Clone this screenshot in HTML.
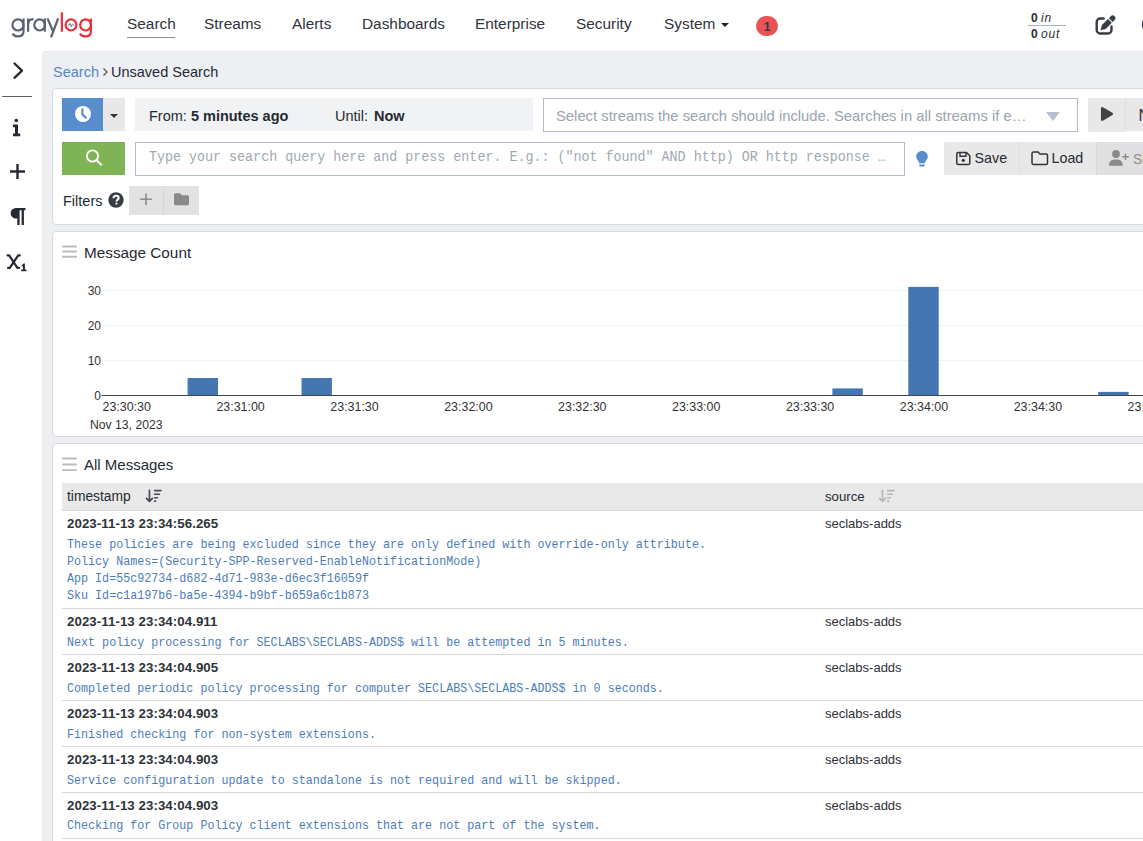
<!DOCTYPE html>
<html><head><meta charset="utf-8">
<style>
*{box-sizing:border-box;margin:0;padding:0}
html,body{width:1143px;height:841px;overflow:hidden;background:#fff;font-family:"Liberation Sans",sans-serif;color:#1f1f1f}
.a{position:absolute;white-space:pre}
#nav{position:absolute;left:0;top:0;width:1143px;height:51px;background:#fff}
.nl{position:absolute;top:15px;font-size:15.4px;color:#30343b;line-height:18px}
#side{position:absolute;left:0;top:51px;width:42px;height:790px;background:#fff}
#main{position:absolute;left:42px;top:51px;width:1101px;height:790px;background:#eeeff2;border-top-left-radius:4px;border-top:1px solid #e6e7eb;border-left:1px solid #e9eaee}
.panel{position:absolute;left:52px;width:1100px;background:#fff;border:1px solid #d6dae2;border-radius:4px}
.mono{font-family:"Liberation Mono",monospace}
</style></head><body>
<div id="nav">
  <!-- logo -->
  <svg style="position:absolute;left:0;top:0" width="100" height="45">
   <g fill="none" stroke-width="2.2">
    <g stroke="#5a6371">
     <ellipse cx="18" cy="24.9" rx="5.5" ry="5.6"/>
     <path d="M23.5,18.4 V31.5 C23.5,35 21.2,36.4 18,36.4 C15.2,36.4 13.6,35.3 12.6,33.6"/>
     <path d="M28.1,18.4 V31.7 M28.1,24.2 C28.1,20.6 30.2,19.2 33.6,19.2"/>
     <ellipse cx="39.6" cy="24.9" rx="5.3" ry="5.6"/>
     <path d="M44.8,18.4 V31.7"/>
     <path d="M47.5,18.4 L53,31.3 M58.2,18.4 L51,37.4"/>
    </g>
    <g stroke="#ea2e3a">
     <path d="M61.85,12.3 V31.7"/>
     <ellipse cx="71" cy="24.9" rx="5.4" ry="5.6"/>
     <ellipse cx="85.6" cy="24.9" rx="5.4" ry="5.6"/>
     <path d="M90.9,18.4 V31.5 C90.9,35 88.6,36.4 85.4,36.4 C82.6,36.4 81,35.3 80,33.6"/>
    </g>
    <polyline points="68,25.2 69.3,25.2 70.1,23.4 71.3,26.8 72.2,24.2 73,25.2 74,25.2" stroke="#5a6371" stroke-width="0.8"/>
   </g>
  </svg>
  <div class="nl" style="left:127px">Search</div>
  <div style="position:absolute;left:127px;top:37px;width:48px;height:1px;background:#8a8e96"></div>
  <div class="nl" style="left:204px">Streams</div>
  <div class="nl" style="left:292px">Alerts</div>
  <div class="nl" style="left:362px">Dashboards</div>
  <div class="nl" style="left:475px">Enterprise</div>
  <div class="nl" style="left:576px">Security</div>
  <div class="nl" style="left:664px">System</div>
  <div style="position:absolute;left:721px;top:23px;width:0;height:0;border-left:4px solid transparent;border-right:4px solid transparent;border-top:4px solid #1f2328"></div>
  <div style="position:absolute;left:756px;top:16px;width:22px;height:20px;border-radius:10px;background:#e95257;color:#323943;font-size:12px;font-weight:bold;text-align:center;line-height:22px">1</div>
  <div class="a" style="left:1031px;top:11px;font-size:12px;line-height:14px;color:#2a2e35"><b>0</b> <i style="letter-spacing:0.8px">in</i></div>
  <div style="position:absolute;left:1028px;top:25px;width:38px;height:1px;background:#a4b1c2"></div>
  <div class="a" style="left:1031px;top:27px;font-size:12px;line-height:14px;color:#2a2e35"><b>0</b> <i style="letter-spacing:0.8px">out</i></div>
  <svg style="position:absolute;left:1080px;top:0" width="63" height="50">
   <path d="M23.7,18.5 H20.2 A3.5,3.5 0 0 0 16.7,22 V30 A3.5,3.5 0 0 0 20.2,33.5 H28 A3.5,3.5 0 0 0 31.5,30 V26.5" fill="none" stroke="#373c45" stroke-width="2.4" stroke-linecap="round"/>
   <g transform="translate(21,29.8) rotate(45)">
    <path d="M0,0.8 L-2.7,-4 V-12.6 H2.7 V-4 Z" fill="#373c45"/>
    <path d="M-2.7,-13.8 H2.7 V-16.5 A2.7,2.7 0 0 0 -2.7,-16.5 Z" fill="#373c45"/>
   </g>
   <circle cx="71.5" cy="24.5" r="8.5" fill="none" stroke="#373c45" stroke-width="2.5"/>
  </svg>
</div>
<div id="side">
  <svg style="position:absolute;left:0;top:0" width="42" height="240" viewBox="0 51 42 240">
    <polyline points="14.5,63.5 22,70.7 14.5,77.8" fill="none" stroke="#252a33" stroke-width="2.3" stroke-linecap="round" stroke-linejoin="round"/>
    <rect x="2" y="96" width="30" height="1" fill="#5a5e66"/>
    <circle cx="16.3" cy="120.5" r="1.8" fill="#252a33"/>
    <path d="M13,124.5 H18 V133.5 H20.2 V136.2 H13 V133.5 H15 V127.2 H13 Z" fill="#252a33"/>
    <path d="M17.5,164 V179 M10,171.5 H25" stroke="#252a33" stroke-width="2.4" fill="none"/>
    <path d="M15.9,208 H25.5 V210.3 H23.9 V225 H21.6 V210.3 H19.6 V225 H17.3 V218.6 H15.9 A5.3,5.3 0 0 1 15.9,208 Z" fill="#252a33"/>
    <path d="M7.6,255.4 H9.2 L17.4,267.8 H19" stroke="#252a33" stroke-width="2.2" fill="none" stroke-linecap="round" stroke-linejoin="round"/><path d="M19.8,255.4 H18.2 L9.8,267.8 H8" stroke="#252a33" stroke-width="2.2" fill="none" stroke-linecap="round" stroke-linejoin="round"/>
    <path d="M21.5,265.6 L23.6,263.6 H24.9 V269.6 H26.4 V271.3 H21.3 V269.6 H23 V266 L22,266.8 Z" fill="#252a33"/>
  </svg>
</div>
<div id="main"></div>
<!-- breadcrumb -->
<div class="a" style="left:53px;top:63px;font-size:14.5px;line-height:18px;color:#5587c8">Search</div>
<svg style="position:absolute;left:101px;top:67px" width="8" height="10"><polyline points="2.5,1.5 6,5 2.5,8.5" fill="none" stroke="#555" stroke-width="1.3"/></svg>
<div class="a" style="left:111px;top:63px;font-size:14.5px;line-height:18px;color:#252a33">Unsaved Search</div>

<!-- panel 1 -->
<div class="panel" style="top:88px;height:137px"></div>
<div style="position:absolute;left:62px;top:98px;width:41px;height:33px;background:#578dcc"></div>
<svg style="position:absolute;left:62px;top:98px" width="41" height="33">
  <circle cx="21" cy="16" r="8" fill="#fff"/>
  <polyline points="20.4,11.2 20.4,16.6 24,19.6" fill="none" stroke="#578dcc" stroke-width="2.1" stroke-linecap="round" stroke-linejoin="round"/>
</svg>
<div style="position:absolute;left:103px;top:98px;width:22px;height:33px;background:#e8e8e8"></div>
<div style="position:absolute;left:110px;top:114px;width:0;height:0;border-left:4px solid transparent;border-right:4px solid transparent;border-top:4px solid #333"></div>
<div style="position:absolute;left:135px;top:98px;width:398px;height:33px;background:#f1f2f4"></div>
<div class="a" style="left:149px;top:107px;font-size:14.5px;line-height:18px;color:#252a33">From: <b>5 minutes ago</b></div>
<div class="a" style="left:335px;top:107px;font-size:14.5px;line-height:18px;color:#252a33">Until:</div><div class="a" style="left:374px;top:107px;font-size:14.5px;line-height:18px;color:#252a33"><b>Now</b></div>
<div style="position:absolute;left:543px;top:98px;width:535px;height:34px;border:1px solid #b0bccd;background:#fff"></div>
<div class="a" style="left:556px;top:107px;font-size:14.8px;line-height:18px;color:#9aa3b0">Select streams the search should include. Searches in all streams if e…</div>
<div style="position:absolute;left:1046px;top:112px;width:0;height:0;border-left:7.5px solid transparent;border-right:7.5px solid transparent;border-top:9px solid #b5c0d0"></div>
<div style="position:absolute;left:1088px;top:98px;width:38px;height:34px;background:#e8e8e8"></div>
<svg style="position:absolute;left:1088px;top:98px" width="38" height="34"><path d="M14.2,10.2 L23.8,15.9 L14.2,21.6 Z" fill="#434343" stroke="#434343" stroke-width="2.5" stroke-linejoin="round"/></svg>
<div style="position:absolute;left:1125px;top:98px;width:30px;height:33px;background:#e8e8e8;border-left:1px solid #dfdfe1"></div>
<div class="a" style="left:1138.5px;top:106.5px;font-size:16px;line-height:18px;color:#2e3238">N</div>

<div style="position:absolute;left:62px;top:142px;width:63px;height:33px;background:#7eb356"></div>
<svg style="position:absolute;left:62px;top:142px" width="63" height="33">
  <circle cx="30.5" cy="14" r="5.6" fill="none" stroke="#fff" stroke-width="1.9"/>
  <line x1="34.6" y1="18.2" x2="39.3" y2="22.8" stroke="#fff" stroke-width="2" stroke-linecap="round"/>
</svg>
<div style="position:absolute;left:135px;top:142px;width:770px;height:34px;border:1px solid #b0bccd;background:#fff"></div>
<div class="a mono" style="left:149px;top:149px;font-size:15.3px;line-height:16px;color:#a2a8b2;transform:scaleX(0.8725);transform-origin:0 0">Type your search query here and press enter. E.g.: ("not found" AND http) OR http response …</div>
<svg style="position:absolute;left:914px;top:149px" width="16" height="20">
  <path d="M8,2 C4.6,2 2.2,4.6 2.2,7.6 C2.2,9.8 3.6,11 4.6,12.6 C5,13.3 5.1,13.8 5.1,14.2 H10.9 C10.9,13.8 11,13.3 11.4,12.6 C12.4,11 13.8,9.8 13.8,7.6 C13.8,4.6 11.4,2 8,2 Z" fill="#578dcc"/>
  <path d="M5.3,15.4 H10.7 V16.3 C10.7,17 10,17.6 9.4,17.6 H6.6 C6,17.6 5.3,17 5.3,16.3 Z" fill="#578dcc"/>
</svg>
<div style="position:absolute;left:944px;top:142px;width:76px;height:33px;background:#e8e8e8"></div>
<div style="position:absolute;left:1019px;top:142px;width:77px;height:33px;background:#e8e8e8;border-left:1px solid #dedede"></div>
<div style="position:absolute;left:1096px;top:142px;width:60px;height:33px;background:#e0e0e2;border-left:1px solid #d8d8da"></div>
<svg style="position:absolute;left:955px;top:150px" width="18" height="17">
  <path d="M3.2,2.5 H11.5 L14.8,5.8 V13.2 C14.8,14 14.2,14.6 13.4,14.6 H3.2 C2.4,14.6 1.8,14 1.8,13.2 V3.9 C1.8,3.1 2.4,2.5 3.2,2.5 Z" fill="none" stroke="#333" stroke-width="1.5"/>
  <path d="M5,2.8 V6.2 H11 V2.8" fill="none" stroke="#333" stroke-width="1.4"/>
  <circle cx="8.3" cy="10.3" r="1.6" fill="#333"/>
</svg>
<div class="a" style="left:974.5px;top:149px;font-size:14.3px;line-height:18px;color:#252a33">Save</div>
<svg style="position:absolute;left:1030px;top:149px" width="20" height="18">
  <path d="M3.5,3 H8 L10,5 H16 C16.8,5 17.5,5.7 17.5,6.5 V14 C17.5,14.8 16.8,15.5 16,15.5 H3.5 C2.7,15.5 2,14.8 2,14 V4.5 C2,3.7 2.7,3 3.5,3 Z" fill="none" stroke="#333" stroke-width="1.5"/>
</svg>
<div class="a" style="left:1051.5px;top:149px;font-size:14.3px;line-height:18px;color:#252a33">Load</div>
<svg style="position:absolute;left:1106px;top:148px" width="26" height="20">
  <circle cx="10" cy="6" r="3.9" fill="#8a8a8a"/>
  <path d="M3,17.8 C3,13.3 5.5,11.4 10,11.4 C14.5,11.4 16.8,13.3 16.8,17.8 Z" fill="#8a8a8a"/>
  <path d="M19.5,5.4 V12 M16.2,8.7 H22.8" stroke="#8a8a8a" stroke-width="1.4"/>
</svg>
<div class="a" style="left:1132.5px;top:150px;font-size:15.5px;line-height:18px;color:#8c8c8c;transform:scaleX(0.88);transform-origin:0 0">Sh</div>

<div class="a" style="left:63px;top:192px;font-size:14.5px;line-height:18px;color:#252a33">Filters</div>
<svg style="position:absolute;left:108px;top:192px" width="16" height="16">
  <circle cx="8" cy="8" r="7.7" fill="#373c45"/>
  <path d="M5.5,6.2 C5.5,4.7 6.6,3.7 8.1,3.7 C9.6,3.7 10.7,4.7 10.7,6 C10.7,7.5 8.6,7.7 8.6,9.2 V9.5" fill="none" stroke="#fff" stroke-width="2"/>
  <circle cx="8.4" cy="11.6" r="1.1" fill="#fff"/>
</svg>
<div style="position:absolute;left:129px;top:186px;width:70px;height:29px;background:#e2e2e3"></div>
<div style="position:absolute;left:163px;top:186px;width:1px;height:29px;background:#d6d6d6"></div>
<svg style="position:absolute;left:129px;top:186px" width="70" height="29">
  <path d="M17,7.5 V19 M11.2,13.2 H22.8" stroke="#8a8a8a" stroke-width="1.6"/>
  <path d="M46.5,7.3 H51 L53,9.3 H58.5 C59.3,9.3 60,10 60,10.8 V17.8 C60,18.6 59.3,19.3 58.5,19.3 H46.5 C45.7,19.3 45,18.6 45,17.8 V8.8 C45,8 45.7,7.3 46.5,7.3 Z" fill="#8a8a8a"/>
</svg>


<!-- panel 2 -->
<div class="panel" style="top:231px;height:206px"></div>
<svg style="position:absolute;left:62px;top:245px" width="16" height="13"><rect x="0" y="0.5" width="15" height="2" rx="1" fill="#bcbcbc"/><rect x="0" y="5.5" width="15" height="2" rx="1" fill="#bcbcbc"/><rect x="0" y="10.8" width="15" height="2" rx="1" fill="#bcbcbc"/></svg>
<div class="a" style="left:84px;top:244px;font-size:15.3px;line-height:18px;color:#252a33">Message Count</div>
<svg style="position:absolute;left:53px;top:270px" width="1090" height="166">
  <g transform="translate(-53,-270)">
  <line x1="102" y1="290.5" x2="1143" y2="290.5" stroke="#f1f2f4" stroke-width="1"/>
  <line x1="102" y1="325.5" x2="1143" y2="325.5" stroke="#f1f2f4" stroke-width="1"/>
  <line x1="102" y1="360.5" x2="1143" y2="360.5" stroke="#f1f2f4" stroke-width="1"/>
  <rect x="187.6" y="378" width="30.4" height="17.4" fill="#4477b1"/>
  <rect x="301.5" y="378" width="30.4" height="17.4" fill="#4477b1"/>
  <rect x="832.4" y="388.4" width="30.4" height="7" fill="#4477b1"/>
  <rect x="908.3" y="286.9" width="30.4" height="108.5" fill="#4477b1"/>
  <rect x="1098.2" y="391.9" width="30.4" height="3.5" fill="#4477b1"/>
  <line x1="101.5" y1="395.5" x2="1143" y2="395.5" stroke="#444" stroke-width="1.2"/>
  </g>
</svg>
<div class="a" style="left:0;top:284px;width:101px;text-align:right;font-size:12px;line-height:14px;color:#333">30</div>
<div class="a" style="left:0;top:319px;width:101px;text-align:right;font-size:12px;line-height:14px;color:#333">20</div>
<div class="a" style="left:0;top:354px;width:101px;text-align:right;font-size:12px;line-height:14px;color:#333">10</div>
<div class="a" style="left:0;top:389px;width:101px;text-align:right;font-size:12px;line-height:14px;color:#333">0</div>
<div class="a" style="left:86.7px;top:400px;width:80px;text-align:center;font-size:12.45px;line-height:14px;color:#333">23:30:30</div>
<div class="a" style="left:200.6px;top:400px;width:80px;text-align:center;font-size:12.45px;line-height:14px;color:#333">23:31:00</div>
<div class="a" style="left:314.5px;top:400px;width:80px;text-align:center;font-size:12.45px;line-height:14px;color:#333">23:31:30</div>
<div class="a" style="left:428.4px;top:400px;width:80px;text-align:center;font-size:12.45px;line-height:14px;color:#333">23:32:00</div>
<div class="a" style="left:542.3px;top:400px;width:80px;text-align:center;font-size:12.45px;line-height:14px;color:#333">23:32:30</div>
<div class="a" style="left:656.2px;top:400px;width:80px;text-align:center;font-size:12.45px;line-height:14px;color:#333">23:33:00</div>
<div class="a" style="left:770.1px;top:400px;width:80px;text-align:center;font-size:12.45px;line-height:14px;color:#333">23:33:30</div>
<div class="a" style="left:884.0px;top:400px;width:80px;text-align:center;font-size:12.45px;line-height:14px;color:#333">23:34:00</div>
<div class="a" style="left:997.9px;top:400px;width:80px;text-align:center;font-size:12.45px;line-height:14px;color:#333">23:34:30</div>
<div class="a" style="left:1111.8px;top:400px;width:80px;text-align:center;font-size:12.45px;line-height:14px;color:#333">23:35:00</div>
<div class="a" style="left:90px;top:418px;font-size:12.2px;line-height:14px;color:#333">Nov 13, 2023</div>

<!-- panel 3 -->
<div class="panel" style="top:443px;height:420px"></div>
<svg style="position:absolute;left:62px;top:456.5px" width="16" height="14"><rect x="0" y="0.5" width="15" height="2" rx="1" fill="#bcbcbc"/><rect x="0" y="6.5" width="15" height="2" rx="1" fill="#bcbcbc"/><rect x="0" y="12.3" width="15" height="2" rx="1" fill="#bcbcbc"/></svg>
<div class="a" style="left:84px;top:456px;font-size:15px;line-height:18px;color:#252a33">All Messages</div>
<div style="position:absolute;left:62px;top:483px;width:1090px;height:28px;background:#e9e9e9;border-bottom:1px solid #d8d8d8"></div>
<div class="a" style="left:67px;top:489px;font-size:13.8px;line-height:16px;color:#252a33">timestamp</div>
<svg style="position:absolute;left:140px;top:485px" width="30" height="22">
 <path d="M9.45,5.3 V16 M6.5,13.3 L9.45,16.4 L12.4,13.3" fill="none" stroke="#454a53" stroke-width="1.7" stroke-linecap="round" stroke-linejoin="round"/>
 <path d="M14.6,5.6 H21 M14.6,9.2 H19.4 M14.6,12.7 H17.4 M14.6,16.1 H15.6" stroke="#454a53" stroke-width="1.6" stroke-linecap="round"/>
</svg>
<div class="a" style="left:825px;top:489px;font-size:13.2px;line-height:16px;color:#252a33">source</div>
<svg style="position:absolute;left:873px;top:485px" width="30" height="22">
 <path d="M9.45,5.3 V16 M6.5,13.3 L9.45,16.4 L12.4,13.3" fill="none" stroke="#b8b8b8" stroke-width="1.7" stroke-linecap="round" stroke-linejoin="round"/>
 <path d="M14.6,5.6 H21 M14.6,9.2 H19.4 M14.6,12.7 H17.4 M14.6,16.1 H15.6" stroke="#b8b8b8" stroke-width="1.6" stroke-linecap="round"/>
</svg>
<!--rows-->
<div class="a" style="left:67px;top:516.0px;font-size:13.3px;line-height:16px;font-weight:bold;color:#30333a;letter-spacing:0.05px">2023-11-13 23:34:56.265</div>
<div class="a" style="left:825px;top:517.0px;margin-top:-1px;font-size:13px;line-height:16px;color:#2e3238">seclabs-adds</div>
<div class="a mono" style="left:67px;top:535.6px;font-size:13.5px;line-height:17px;color:#4c7dba;transform:scaleX(0.8667);transform-origin:0 0">These policies are being excluded since they are only defined with override-only attribute.</div>
<div class="a mono" style="left:67px;top:552.9px;font-size:13.5px;line-height:17px;color:#4c7dba;transform:scaleX(0.8667);transform-origin:0 0">Policy Names=(Security-SPP-Reserved-EnableNotificationMode)</div>
<div class="a mono" style="left:67px;top:570.1px;font-size:13.5px;line-height:17px;color:#4c7dba;transform:scaleX(0.8667);transform-origin:0 0">App Id=55c92734-d682-4d71-983e-d6ec3f16059f</div>
<div class="a mono" style="left:67px;top:587.4px;font-size:13.5px;line-height:17px;color:#4c7dba;transform:scaleX(0.8667);transform-origin:0 0">Sku Id=c1a197b6-ba5e-4394-b9bf-b659a6c1b873</div>
<div style="position:absolute;left:62px;top:608.4px;width:1090px;height:1px;background:#d8d8d8"></div>
<div class="a" style="left:67px;top:614.4px;font-size:13.3px;line-height:16px;font-weight:bold;color:#30333a;letter-spacing:0.05px">2023-11-13 23:34:04.911</div>
<div class="a" style="left:825px;top:615.4px;margin-top:-1px;font-size:13px;line-height:16px;color:#2e3238">seclabs-adds</div>
<div class="a mono" style="left:67px;top:634.0px;font-size:13.5px;line-height:17px;color:#4c7dba;transform:scaleX(0.8667);transform-origin:0 0">Next policy processing for SECLABS\SECLABS-ADDS$ will be attempted in 5 minutes.</div>
<div style="position:absolute;left:62px;top:654.3px;width:1090px;height:1px;background:#d8d8d8"></div>
<div class="a" style="left:67px;top:660.3px;font-size:13.3px;line-height:16px;font-weight:bold;color:#30333a;letter-spacing:0.05px">2023-11-13 23:34:04.905</div>
<div class="a" style="left:825px;top:661.3px;margin-top:-1px;font-size:13px;line-height:16px;color:#2e3238">seclabs-adds</div>
<div class="a mono" style="left:67px;top:679.9px;font-size:13.5px;line-height:17px;color:#4c7dba;transform:scaleX(0.8667);transform-origin:0 0">Completed periodic policy processing for computer SECLABS\SECLABS-ADDS$ in 0 seconds.</div>
<div style="position:absolute;left:62px;top:700.1px;width:1090px;height:1px;background:#d8d8d8"></div>
<div class="a" style="left:67px;top:706.1px;font-size:13.3px;line-height:16px;font-weight:bold;color:#30333a;letter-spacing:0.05px">2023-11-13 23:34:04.903</div>
<div class="a" style="left:825px;top:707.1px;margin-top:-1px;font-size:13px;line-height:16px;color:#2e3238">seclabs-adds</div>
<div class="a mono" style="left:67px;top:725.7px;font-size:13.5px;line-height:17px;color:#4c7dba;transform:scaleX(0.8667);transform-origin:0 0">Finished checking for non-system extensions.</div>
<div style="position:absolute;left:62px;top:746.0px;width:1090px;height:1px;background:#d8d8d8"></div>
<div class="a" style="left:67px;top:752.0px;font-size:13.3px;line-height:16px;font-weight:bold;color:#30333a;letter-spacing:0.05px">2023-11-13 23:34:04.903</div>
<div class="a" style="left:825px;top:753.0px;margin-top:-1px;font-size:13px;line-height:16px;color:#2e3238">seclabs-adds</div>
<div class="a mono" style="left:67px;top:771.6px;font-size:13.5px;line-height:17px;color:#4c7dba;transform:scaleX(0.8667);transform-origin:0 0">Service configuration update to standalone is not required and will be skipped.</div>
<div style="position:absolute;left:62px;top:791.8px;width:1090px;height:1px;background:#d8d8d8"></div>
<div class="a" style="left:67px;top:797.8px;font-size:13.3px;line-height:16px;font-weight:bold;color:#30333a;letter-spacing:0.05px">2023-11-13 23:34:04.903</div>
<div class="a" style="left:825px;top:798.8px;margin-top:-1px;font-size:13px;line-height:16px;color:#2e3238">seclabs-adds</div>
<div class="a mono" style="left:67px;top:817.4px;font-size:13.5px;line-height:17px;color:#4c7dba;transform:scaleX(0.8667);transform-origin:0 0">Checking for Group Policy client extensions that are not part of the system.</div>
<div style="position:absolute;left:62px;top:837.7px;width:1090px;height:1px;background:#d8d8d8"></div>
</body></html>
